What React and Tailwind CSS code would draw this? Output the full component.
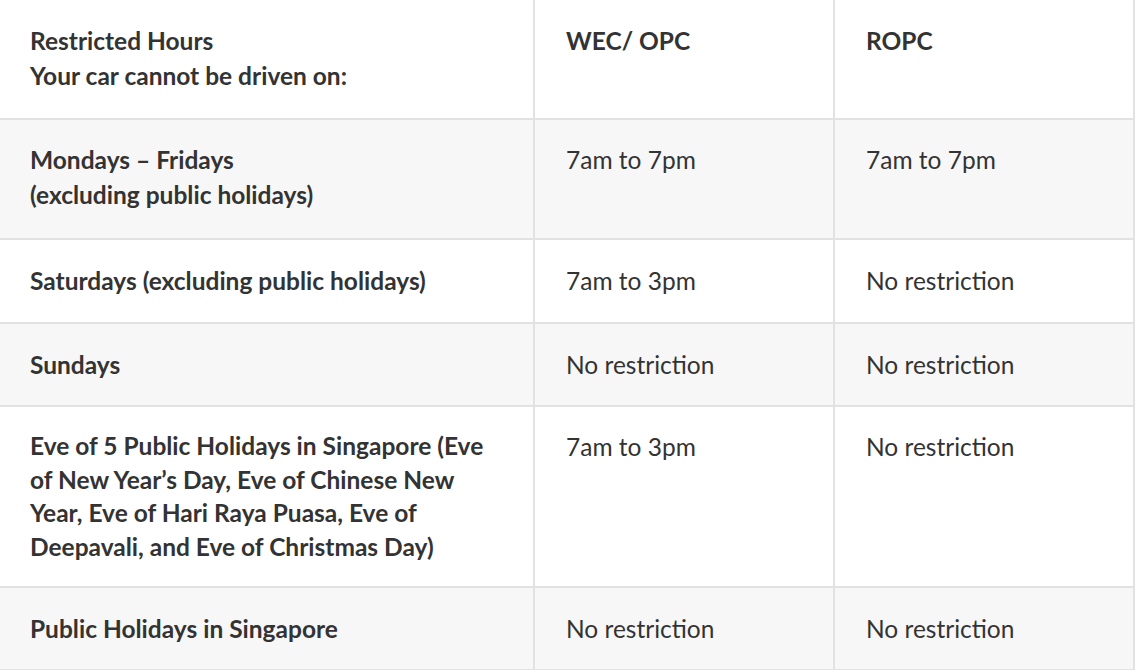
export default function App() {
  const font = { fontFamily: "Lato, 'Noto Sans', sans-serif" };
  const rows = [
    {
      bg: "bg-white",
      head: true,
      c1: (
        <>
          Restricted Hours
          <br />
          Your car cannot be driven on:
        </>
      ),
      c2: "WEC/ OPC",
      c3: "ROPC",
      pad: "pt-[23px] pb-[25px]",
      lh: "leading-[35px]",
    },
    {
      bg: "bg-[#f7f7f7]",
      c1: (
        <>
          Mondays – Fridays
          <br />
          (excluding public holidays)
        </>
      ),
      c2: "7am to 7pm",
      c3: "7am to 7pm",
      pad: "pt-[22px] pb-[26px]",
      lh: "leading-[35px]",
    },
    {
      bg: "bg-white",
      c1: "Saturdays (excluding public holidays)",
      c2: "7am to 3pm",
      c3: "No restriction",
      pad: "pt-[23px] pb-[24px]",
      lh: "leading-[35px]",
    },
    {
      bg: "bg-[#f7f7f7]",
      c1: "Sundays",
      c2: "No restriction",
      c3: "No restriction",
      pad: "pt-[23px] pb-[23px]",
      lh: "leading-[35px]",
    },
    {
      bg: "bg-white",
      c1: (
        <>
          Eve of 5 Public Holidays in Singapore (Eve
          <br />
          of New Year’s Day, Eve of Chinese New
          <br />
          Year, Eve of Hari Raya Puasa, Eve of
          <br />
          Deepavali, and Eve of Christmas Day)
        </>
      ),
      c2: "7am to 3pm",
      c3: "No restriction",
      pad: "pt-[22px] pb-[23px]",
      lh: "leading-[33.5px]",
    },
    {
      bg: "bg-[#f7f7f7]",
      c1: "Public Holidays in Singapore",
      c2: "No restriction",
      c3: "No restriction",
      pad: "pt-[23px] pb-[23px]",
      lh: "leading-[35px]",
    },
  ];
  return (
    <div className="w-[1140px] h-[670px] bg-white overflow-hidden text-[#333333] text-[24.5px]" style={font}>
      <div className="w-[1135px] flex flex-col">
        {rows.map((r, i) => (
          <div key={i} className={`flex border-b-2 border-[#e2e2e2] ${r.bg}`}>
            <div className={`w-[535px] shrink-0 border-r-2 border-[#e2e2e2] pl-[30px] pr-4 font-bold whitespace-nowrap ${r.pad} ${r.lh}`}>
              {r.c1}
            </div>
            <div className={`w-[300px] shrink-0 border-r-2 border-[#e2e2e2] pl-[31px] pr-4 ${r.head ? "font-bold" : ""} ${r.pad} leading-[35px]`}>
              {r.c2}
            </div>
            <div className={`w-[300px] shrink-0 border-r-2 border-[#e2e2e2] pl-[31px] pr-4 ${r.head ? "font-bold" : ""} ${r.pad} leading-[35px]`}>
              {r.c3}
            </div>
          </div>
        ))}
      </div>
    </div>
  );
}
